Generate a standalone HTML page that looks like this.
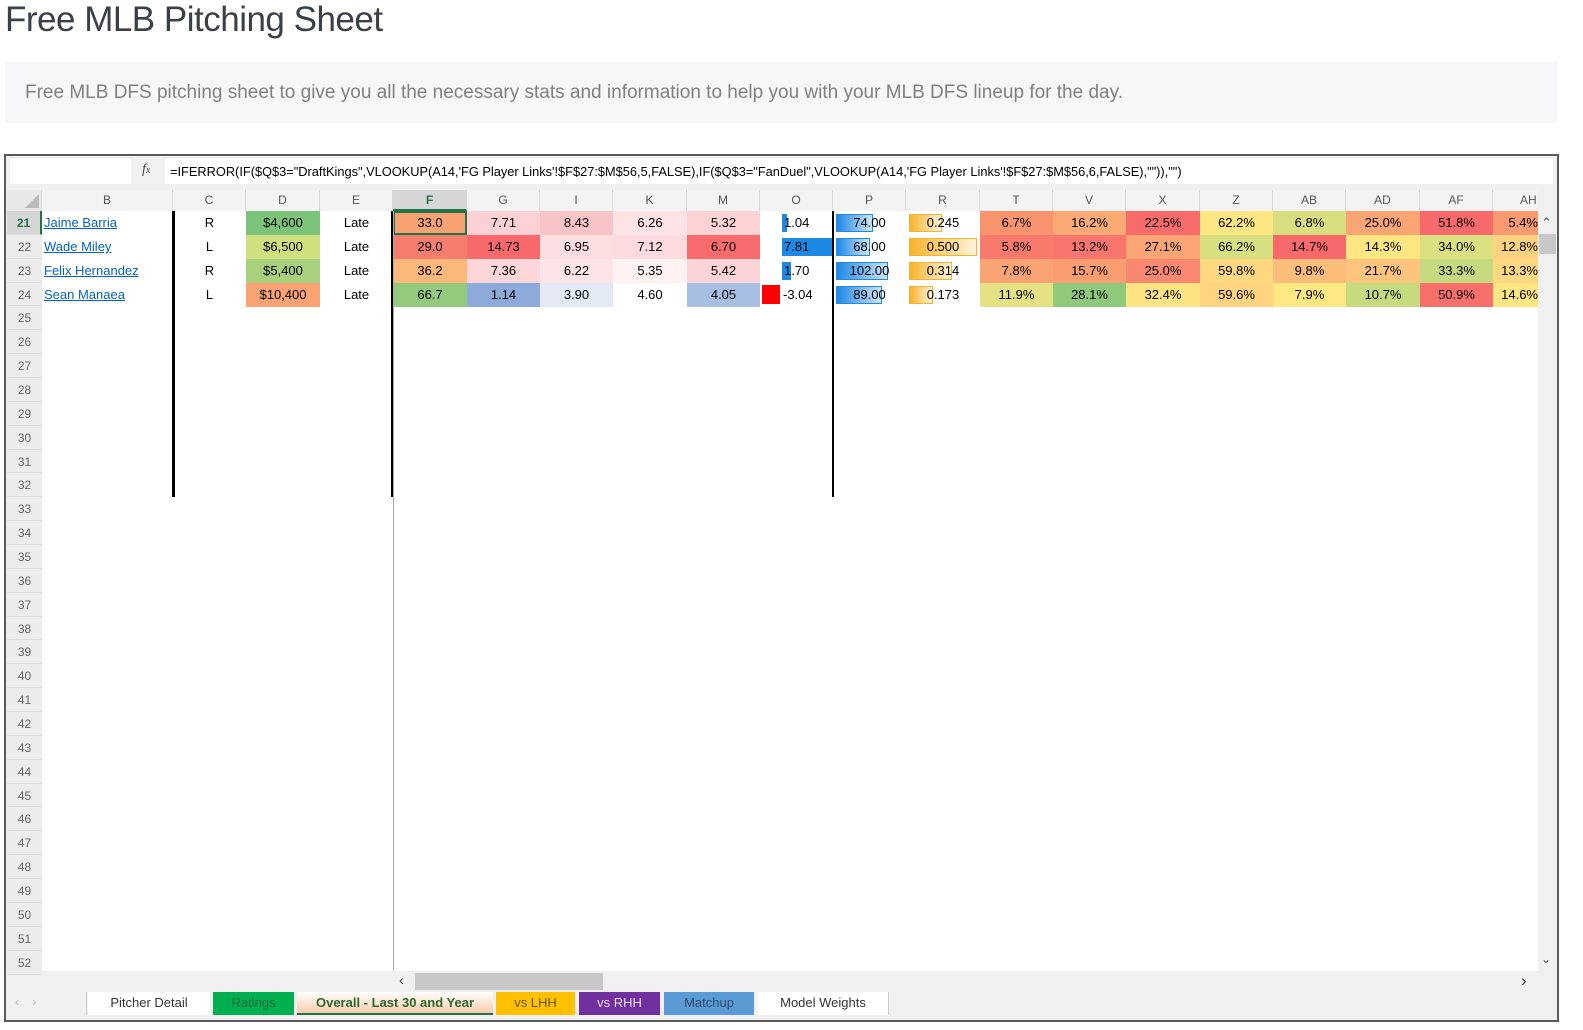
<!DOCTYPE html>
<html><head><meta charset="utf-8"><style>
*{margin:0;padding:0;box-sizing:border-box}
body{width:1583px;height:1030px;background:#fff;position:relative;overflow:hidden;font-family:"Liberation Sans",sans-serif}
.a{position:absolute}
h1{position:absolute;left:5px;top:0px;font-weight:normal;font-size:35px;color:#3a4048;letter-spacing:-0.5px;font-family:"Liberation Sans",sans-serif}
.lead{position:absolute;left:5px;top:62px;width:1553px;height:61px;background:#f7f7f9}
.lead span{position:absolute;left:20px;top:20px;font-size:19px;color:#808080;font-family:"Liberation Sans",sans-serif;white-space:nowrap}
.frame{position:absolute;left:4px;top:154px;width:1555px;height:868px;border:2px solid #5a5a5a;background:#f0f0f0}
.c{position:absolute;height:24px;line-height:24px;text-align:center;font-size:13px;color:#000;font-family:"Liberation Sans Narrow","Liberation Sans",sans-serif;white-space:nowrap;overflow:hidden}
.h{position:absolute;top:190px;height:21px;line-height:21px;text-align:center;font-size:12px;color:#555;border-right:1px solid #d8d8d8;background:#f3f3f3}
.rh{position:absolute;left:7px;width:35px;height:23.87px;line-height:24px;text-align:center;font-size:12px;color:#666;background:#ececec;border-bottom:1px solid #dcdcdc}
.tab{position:absolute;top:992px;height:23px;line-height:22px;text-align:center;font-size:13px;color:#333}
a{color:#0563c1;text-decoration:underline}
</style></head><body>
<h1>Free MLB Pitching Sheet</h1>
<div class="lead"><span>Free MLB DFS pitching sheet to give you all the necessary stats and information to help you with your MLB DFS lineup for the day.</span></div>
<div class="frame"></div>
<!-- formula bar -->
<div class="a" style="left:10px;top:159px;width:121px;height:25px;background:#fff"></div>
<div class="a" style="left:142px;top:162px;font-size:14px;font-style:italic;color:#444;font-family:'Liberation Serif',serif">f<span style="font-size:10px">x</span></div>
<div class="a" style="left:165px;top:159px;width:1388px;height:25px;background:#fff"></div>
<div class="a" style="left:170px;top:164px;font-size:12.8px;color:#000;white-space:nowrap;font-family:'Liberation Sans Narrow','Liberation Sans',sans-serif">=IFERROR(IF($Q$3="DraftKings",VLOOKUP(A14,'FG Player Links'!$F$27:$M$56,5,FALSE),IF($Q$3="FanDuel",VLOOKUP(A14,'FG Player Links'!$F$27:$M$56,6,FALSE),"")),"")</div>
<!-- grid white -->
<div class="a" style="left:42px;top:211px;width:1496px;height:760px;background:#fff"></div>
<!-- column headers -->
<div class="h" style="left:7px;width:35px;background:#e8e8e8"><svg width="35" height="21"><polygon points="32,4 32,18 18,18" fill="#bbb"/></svg></div>
<div class="h" style="left:42px;width:131px">B</div>
<div class="h" style="left:173px;width:73px">C</div>
<div class="h" style="left:246px;width:74px">D</div>
<div class="h" style="left:320px;width:73px">E</div>
<div class="h" style="left:393px;width:74px;background:#d6d6d6;color:#217346;font-weight:bold;border-bottom:2px solid #217346">F</div>
<div class="h" style="left:467px;width:73px">G</div>
<div class="h" style="left:540px;width:73px">I</div>
<div class="h" style="left:613px;width:74px">K</div>
<div class="h" style="left:687px;width:73px">M</div>
<div class="h" style="left:760px;width:73px">O</div>
<div class="h" style="left:833px;width:73px">P</div>
<div class="h" style="left:906px;width:74px">R</div>
<div class="h" style="left:980px;width:73px">T</div>
<div class="h" style="left:1053px;width:73px">V</div>
<div class="h" style="left:1126px;width:74px">X</div>
<div class="h" style="left:1200px;width:73px">Z</div>
<div class="h" style="left:1273px;width:73px">AB</div>
<div class="h" style="left:1346px;width:74px">AD</div>
<div class="h" style="left:1420px;width:73px">AF</div>
<div class="h" style="left:1493px;width:45px;border-right:0;text-align:left;padding-left:27px">AH</div>
<!-- row headers -->
<div class="a" style="left:7px;top:211px">
<div class="rh" style="position:relative;left:0;background:#d6d6d6;color:#217346;font-weight:bold;border-right:2px solid #217346">21</div>
<div class="rh" style="position:relative;left:0">22</div><div class="rh" style="position:relative;left:0">23</div><div class="rh" style="position:relative;left:0">24</div><div class="rh" style="position:relative;left:0">25</div><div class="rh" style="position:relative;left:0">26</div><div class="rh" style="position:relative;left:0">27</div><div class="rh" style="position:relative;left:0">28</div><div class="rh" style="position:relative;left:0">29</div><div class="rh" style="position:relative;left:0">30</div><div class="rh" style="position:relative;left:0">31</div><div class="rh" style="position:relative;left:0">32</div><div class="rh" style="position:relative;left:0">33</div><div class="rh" style="position:relative;left:0">34</div><div class="rh" style="position:relative;left:0">35</div><div class="rh" style="position:relative;left:0">36</div><div class="rh" style="position:relative;left:0">37</div><div class="rh" style="position:relative;left:0">38</div><div class="rh" style="position:relative;left:0">39</div><div class="rh" style="position:relative;left:0">40</div><div class="rh" style="position:relative;left:0">41</div><div class="rh" style="position:relative;left:0">42</div><div class="rh" style="position:relative;left:0">43</div><div class="rh" style="position:relative;left:0">44</div><div class="rh" style="position:relative;left:0">45</div><div class="rh" style="position:relative;left:0">46</div><div class="rh" style="position:relative;left:0">47</div><div class="rh" style="position:relative;left:0">48</div><div class="rh" style="position:relative;left:0">49</div><div class="rh" style="position:relative;left:0">50</div><div class="rh" style="position:relative;left:0">51</div><div class="rh" style="position:relative;left:0">52</div>
</div>

<!-- row 21 -->
<div class="c" style="left:44px;top:211px;width:129px;text-align:left"><a>Jaime Barria</a></div>
<div class="c" style="left:173px;top:211px;width:73px">R</div>
<div class="c" style="left:246px;top:211px;width:74px;background:#7dc47b">$4,600</div>
<div class="c" style="left:320px;top:211px;width:73px">Late</div>
<div class="c" style="left:393px;top:211px;width:74px;background:#f8a172;border:2px solid #217346;line-height:20px">33.0</div>
<div class="c" style="left:467px;top:211px;width:73px;background:#fbd1d5">7.71</div>
<div class="c" style="left:540px;top:211px;width:73px;background:#f9c4c7">8.43</div>
<div class="c" style="left:613px;top:211px;width:74px;background:#fde3e5">6.26</div>
<div class="c" style="left:687px;top:211px;width:73px;background:#fcd2d5">5.32</div>
<div class="c" style="left:980px;top:211px;width:73px;background:#f9946f">6.7%</div>
<div class="c" style="left:1053px;top:211px;width:73px;background:#fbaa76">16.2%</div>
<div class="c" style="left:1126px;top:211px;width:74px;background:#f86b6b">22.5%</div>
<div class="c" style="left:1200px;top:211px;width:73px;background:#fee683">62.2%</div>
<div class="c" style="left:1273px;top:211px;width:73px;background:#d9df81">6.8%</div>
<div class="c" style="left:1346px;top:211px;width:74px;background:#faa574">25.0%</div>
<div class="c" style="left:1420px;top:211px;width:73px;background:#f8696b">51.8%</div>
<div class="c" style="left:1493px;top:211px;width:45px;background:#f99a70;text-align:right">5.4%</div>
<!-- row 22 -->
<div class="c" style="left:44px;top:235px;width:129px;text-align:left"><a>Wade Miley</a></div>
<div class="c" style="left:173px;top:235px;width:73px">L</div>
<div class="c" style="left:246px;top:235px;width:74px;background:#d2df7f">$6,500</div>
<div class="c" style="left:320px;top:235px;width:73px">Late</div>
<div class="c" style="left:393px;top:235px;width:74px;background:#f57d6e">29.0</div>
<div class="c" style="left:467px;top:235px;width:73px;background:#f8696b">14.73</div>
<div class="c" style="left:540px;top:235px;width:73px;background:#fcdde0">6.95</div>
<div class="c" style="left:613px;top:235px;width:74px;background:#fcdadd">7.12</div>
<div class="c" style="left:687px;top:235px;width:73px;background:#f86b6c">6.70</div>
<div class="c" style="left:980px;top:235px;width:73px;background:#f87a6d">5.8%</div>
<div class="c" style="left:1053px;top:235px;width:73px;background:#f8766d">13.2%</div>
<div class="c" style="left:1126px;top:235px;width:74px;background:#fba574">27.1%</div>
<div class="c" style="left:1200px;top:235px;width:73px;background:#d7df81">66.2%</div>
<div class="c" style="left:1273px;top:235px;width:73px;background:#f8696b">14.7%</div>
<div class="c" style="left:1346px;top:235px;width:74px;background:#fee683">14.3%</div>
<div class="c" style="left:1420px;top:235px;width:73px;background:#dbe081">34.0%</div>
<div class="c" style="left:1493px;top:235px;width:45px;background:#fed280;text-align:right">12.8%</div>
<!-- row 23 -->
<div class="c" style="left:44px;top:259px;width:129px;text-align:left"><a>Felix Hernandez</a></div>
<div class="c" style="left:173px;top:259px;width:73px">R</div>
<div class="c" style="left:246px;top:259px;width:74px;background:#a9d17d">$5,400</div>
<div class="c" style="left:320px;top:259px;width:73px">Late</div>
<div class="c" style="left:393px;top:259px;width:74px;background:#fbb87a">36.2</div>
<div class="c" style="left:467px;top:259px;width:73px;background:#fcd6d9">7.36</div>
<div class="c" style="left:540px;top:259px;width:73px;background:#fde5e7">6.22</div>
<div class="c" style="left:613px;top:259px;width:74px;background:#fef2f3">5.35</div>
<div class="c" style="left:687px;top:259px;width:73px;background:#fcd3d6">5.42</div>
<div class="c" style="left:980px;top:259px;width:73px;background:#faa473">7.8%</div>
<div class="c" style="left:1053px;top:259px;width:73px;background:#fa9e72">15.7%</div>
<div class="c" style="left:1126px;top:259px;width:74px;background:#f98870">25.0%</div>
<div class="c" style="left:1200px;top:259px;width:73px;background:#fed880">59.8%</div>
<div class="c" style="left:1273px;top:259px;width:73px;background:#fcbd7b">9.8%</div>
<div class="c" style="left:1346px;top:259px;width:74px;background:#fdc47d">21.7%</div>
<div class="c" style="left:1420px;top:259px;width:73px;background:#c6db80">33.3%</div>
<div class="c" style="left:1493px;top:259px;width:45px;background:#fed880;text-align:right">13.3%</div>
<!-- row 24 -->
<div class="c" style="left:44px;top:283px;width:129px;text-align:left"><a>Sean Manaea</a></div>
<div class="c" style="left:173px;top:283px;width:73px">L</div>
<div class="c" style="left:246px;top:283px;width:74px;background:#f9a273">$10,400</div>
<div class="c" style="left:320px;top:283px;width:73px">Late</div>
<div class="c" style="left:393px;top:283px;width:74px;background:#94ca7d">66.7</div>
<div class="c" style="left:467px;top:283px;width:73px;background:#8eaadb">1.14</div>
<div class="c" style="left:540px;top:283px;width:73px;background:#e3e9f5">3.90</div>
<div class="c" style="left:613px;top:283px;width:74px;background:#fff">4.60</div>
<div class="c" style="left:687px;top:283px;width:73px;background:#a8bfe4">4.05</div>
<div class="c" style="left:980px;top:283px;width:73px;background:#e4e282">11.9%</div>
<div class="c" style="left:1053px;top:283px;width:73px;background:#8ec97c">28.1%</div>
<div class="c" style="left:1126px;top:283px;width:74px;background:#fee382">32.4%</div>
<div class="c" style="left:1200px;top:283px;width:73px;background:#fed480">59.6%</div>
<div class="c" style="left:1273px;top:283px;width:73px;background:#fee883">7.9%</div>
<div class="c" style="left:1346px;top:283px;width:74px;background:#c6db80">10.7%</div>
<div class="c" style="left:1420px;top:283px;width:73px;background:#f8706c">50.9%</div>
<div class="c" style="left:1493px;top:283px;width:45px;background:#fee683;text-align:right">14.6%</div>

<!-- O databars -->
<div class="a" style="left:782px;top:214px;width:5px;height:18px;background:#1e88e5"></div>
<div class="a" style="left:782px;top:238px;width:51px;height:18px;background:#1e88e5"></div>
<div class="a" style="left:782px;top:262px;width:9px;height:18px;background:#1e88e5"></div>
<div class="a" style="left:762px;top:285px;width:18px;height:19px;background:#ff0000"></div>
<div class="c" style="left:784px;top:211px;width:40px;text-align:left">1.04</div>
<div class="c" style="left:784px;top:235px;width:40px;text-align:left">7.81</div>
<div class="c" style="left:784px;top:259px;width:40px;text-align:left">1.70</div>
<div class="c" style="left:783px;top:283px;width:40px;text-align:left">-3.04</div>
<!-- P databars -->
<div class="a" style="left:836px;top:214px;width:37px;height:18px;background:linear-gradient(90deg,#1e88e5,#cfe5fa);border:1px solid #1e88e5"></div>
<div class="a" style="left:836px;top:238px;width:34px;height:18px;background:linear-gradient(90deg,#1e88e5,#cfe5fa);border:1px solid #1e88e5"></div>
<div class="a" style="left:836px;top:262px;width:52px;height:18px;background:linear-gradient(90deg,#1e88e5,#cfe5fa);border:1px solid #1e88e5"></div>
<div class="a" style="left:836px;top:286px;width:46px;height:18px;background:linear-gradient(90deg,#1e88e5,#cfe5fa);border:1px solid #1e88e5"></div>
<div class="c" style="left:833px;top:211px;width:73px">74.00</div>
<div class="c" style="left:833px;top:235px;width:73px">68.00</div>
<div class="c" style="left:833px;top:259px;width:73px">102.00</div>
<div class="c" style="left:833px;top:283px;width:73px">89.00</div>
<!-- R databars -->
<div class="a" style="left:909px;top:214px;width:33px;height:18px;background:linear-gradient(90deg,#f7b32b,#fff3dc);border:1px solid #f7b32b"></div>
<div class="a" style="left:909px;top:238px;width:68px;height:18px;background:linear-gradient(90deg,#f7b32b,#fff3dc);border:1px solid #f7b32b"></div>
<div class="a" style="left:909px;top:262px;width:43px;height:18px;background:linear-gradient(90deg,#f7b32b,#fff3dc);border:1px solid #f7b32b"></div>
<div class="a" style="left:909px;top:286px;width:24px;height:18px;background:linear-gradient(90deg,#f7b32b,#fff3dc);border:1px solid #f7b32b"></div>
<div class="c" style="left:906px;top:211px;width:74px">0.245</div>
<div class="c" style="left:906px;top:235px;width:74px">0.500</div>
<div class="c" style="left:906px;top:259px;width:74px">0.314</div>
<div class="c" style="left:906px;top:283px;width:74px">0.173</div>

<!-- thick lines -->
<div class="a" style="left:172px;top:211px;width:3px;height:286px;background:#000"></div>
<div class="a" style="left:391px;top:211px;width:2px;height:286px;background:#000"></div>
<div class="a" style="left:393px;top:211px;width:1px;height:760px;background:#aaa"></div>
<div class="a" style="left:832px;top:211px;width:2px;height:286px;background:#000"></div>

<!-- vertical scrollbar -->
<div class="a" style="left:1538px;top:211px;width:19px;height:760px;background:#f0f0f0"></div>
<div class="a" style="left:1541px;top:215px;font-size:13px;color:#555">&#8963;</div>
<div class="a" style="left:1539px;top:234px;width:17px;height:20px;background:#c8c8c8"></div>
<div class="a" style="left:1541px;top:952px;font-size:12px;color:#555">&#8964;</div>
<!-- horizontal scrollbar -->
<div class="a" style="left:394px;top:971px;width:1144px;height:20px;background:#f0f0f0"></div>
<div class="a" style="left:399px;top:972px;font-size:15px;color:#444">&lsaquo;</div>
<div class="a" style="left:415px;top:973px;width:188px;height:17px;background:#c8c8c8"></div>
<div class="a" style="left:1521px;top:971px;font-size:17px;color:#444">&rsaquo;</div>

<!-- tabs -->
<div class="a" style="left:15px;top:995px;font-size:12px;color:#bbb">&lsaquo;&nbsp;&nbsp;&nbsp;&nbsp;&rsaquo;</div>
<div class="a" style="left:86px;top:992px;width:1px;height:23px;background:#ccc"></div>
<div class="tab" style="left:88px;width:122px;background:#fff">Pitcher Detail</div>
<div class="tab" style="left:213px;width:81px;background:#00b050;color:#1f6b3a">Ratings</div>
<div class="tab" style="left:297px;width:196px;background:linear-gradient(#fff,#f8cbad);color:#2b6a2b;font-weight:bold;border-bottom:2px solid #217346">Overall - Last 30 and Year</div>
<div class="tab" style="left:496px;width:79px;background:#ffc000;color:#6b5200">vs LHH</div>
<div class="tab" style="left:579px;width:81px;background:#7030a0;color:#e8dcf2">vs RHH</div>
<div class="tab" style="left:664px;width:90px;background:#5b9bd5;color:#2a4b6e">Matchup</div>
<div class="tab" style="left:757px;width:132px;background:#fff">Model Weights</div>
<div class="a" style="left:888px;top:992px;width:1px;height:23px;background:#ccc"></div>
</body></html>
